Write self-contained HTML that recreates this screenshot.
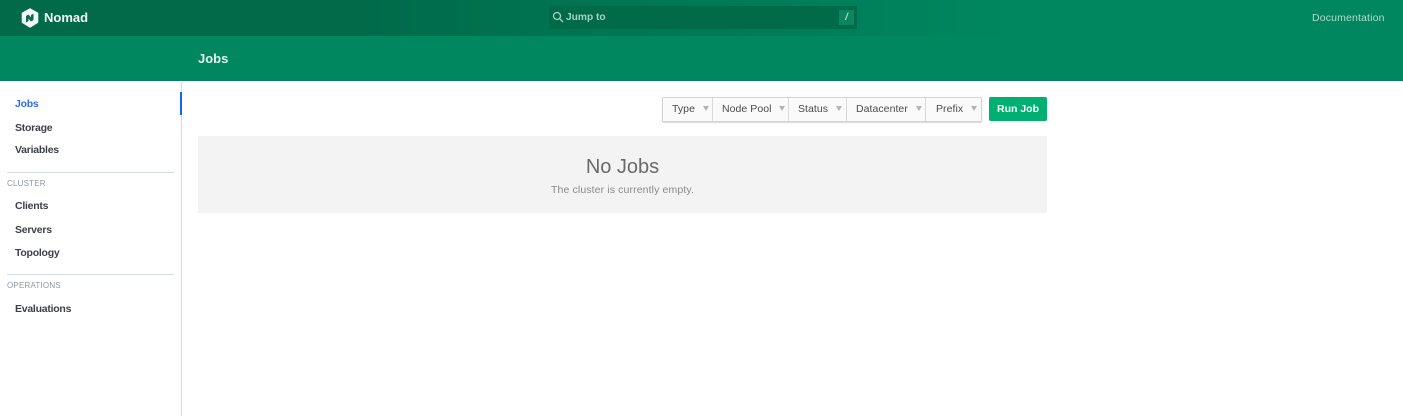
<!DOCTYPE html>
<html>
<head>
<meta charset="utf-8">
<style>
html,body{margin:0;padding:0;width:1403px;height:416px;overflow:hidden;background:#fff;font-family:"Liberation Sans",sans-serif}
.a{position:absolute;white-space:nowrap}
#root{position:relative;width:1403px;height:416px;overflow:hidden;filter:blur(0.35px)}
.nav{font-size:10.500px;font-weight:700;color:#3d4147;left:15px;letter-spacing:-.25px;line-height:14px}
.lbl{font-size:8px;color:#8e96a3;left:7px;line-height:10px;letter-spacing:.2px}
.hr{left:7px;width:167px;height:1px;background:#d5d9e0}
.f{top:98px;height:23px;background:#fafafa;border-right:1px solid #d9d9d9;box-sizing:border-box;font-size:10.500px;line-height:22px;color:#4a4a4a;letter-spacing:.05px}
.f span{position:absolute;white-space:nowrap}
.f i{position:absolute;top:8px;width:0;height:0;border-left:3px solid transparent;border-right:3px solid transparent;border-top:5px solid #b4b4b4}
</style>
</head>
<body>
<div id="root">
<div class="a" style="left:0;top:0;width:1403px;height:36px;background:linear-gradient(90deg,#006a49 0%,#006a49 25%,#00875f 72%,#00875f 100%)"></div>
<div class="a" style="left:0;top:36px;width:1403px;height:45px;background:#00875f"></div>
<svg class="a" style="left:21px;top:8px" width="18" height="20" viewBox="0 0 18 20"><path d="M9 0.500L17 5V14.500L9 19.500L1 14.500V5Z" fill="#f4f8f6" stroke="#f4f8f6" stroke-width=".6" stroke-linejoin="round"/><path d="M5 14.500V8L7.500 6.500L10 9.500V7L12.500 5.500V12L10 13.500L7.500 10.500V13Z" fill="#0a6b4c"/></svg>
<div class="a" style="left:44px;top:10px;font-size:13px;font-weight:700;color:#f3f8f6;line-height:16px">Nomad</div>
<div class="a" style="left:549px;top:6px;width:308px;height:23px;background:#006a49"></div>
<svg class="a" style="left:552px;top:11px" width="12" height="12" viewBox="0 0 12 12" fill="none" stroke="#a9cfc2" stroke-width="1.300"><circle cx="5" cy="5" r="3.500"/><path d="M7.500 7.500L11 11"/></svg>
<div class="a" style="left:566px;top:11px;font-size:10.200px;font-weight:700;color:#a9cfc2;line-height:14px">Jump to</div>
<div class="a" style="left:839px;top:10px;width:15px;height:15px;background:#0b8560;color:#b6d8cc;font-size:10px;font-weight:700;font-style:italic;line-height:15px;text-align:center">/</div>
<div class="a" style="left:1312px;top:11px;font-size:10.500px;color:#b5dacd;line-height:14px;letter-spacing:.15px">Documentation</div>
<div class="a" style="left:198px;top:51px;font-size:13px;font-weight:700;color:#e6f3ee;line-height:16px">Jobs</div>

<div class="a" style="left:181px;top:82px;width:1px;height:334px;background:#d8dbe1"></div>
<div class="a" style="left:179.500px;top:92px;width:2.500px;height:23px;background:#1563ff"></div>

<div class="a nav" style="top:97px;color:#2f6cf5">Jobs</div>
<div class="a nav" style="top:121px">Storage</div>
<div class="a nav" style="top:143px">Variables</div>
<div class="a hr" style="top:172px"></div>
<div class="a lbl" style="top:179px">CLUSTER</div>
<div class="a nav" style="top:199px">Clients</div>
<div class="a nav" style="top:223px">Servers</div>
<div class="a nav" style="top:246px">Topology</div>
<div class="a hr" style="top:274px"></div>
<div class="a lbl" style="top:281px">OPERATIONS</div>
<div class="a nav" style="top:302px">Evaluations</div>

<div class="a" style="left:662px;top:97px;width:320px;height:25px;border:1px solid #d4d4d4;box-sizing:border-box;border-radius:2px;box-shadow:0 1px 1px #d8d8d8;background:#fafafa"></div>
<div class="a f" style="left:663px;width:50px"><span style="left:9px">Type</span><i style="left:40px"></i></div>
<div class="a f" style="left:713px;width:76px"><span style="left:9px">Node Pool</span><i style="left:66px"></i></div>
<div class="a f" style="left:789px;width:58px"><span style="left:9px">Status</span><i style="left:47px"></i></div>
<div class="a f" style="left:847px;width:79px"><span style="left:9px">Datacenter</span><i style="left:69px"></i></div>
<div class="a f" style="left:926px;width:55px;border-right:0"><span style="left:10px">Prefix</span><i style="left:45px"></i></div>
<div class="a" style="left:989px;top:97px;width:58px;height:24px;background:#00b070;border-radius:2px;color:#fff;font-size:10.500px;font-weight:700;line-height:24px;text-align:center">Run Job</div>

<div class="a" style="left:198px;top:136px;width:849px;height:77px;background:#f3f3f3"></div>
<div class="a" style="left:198px;width:849px;top:155px;text-align:center;font-size:20px;color:#6a6a6a;line-height:24px">No Jobs</div>
<div class="a" style="left:198px;width:849px;top:183px;text-align:center;font-size:10.500px;color:#8a8a8a;line-height:14px;letter-spacing:.12px">The cluster is currently empty.</div>
</div>
</body>
</html>
